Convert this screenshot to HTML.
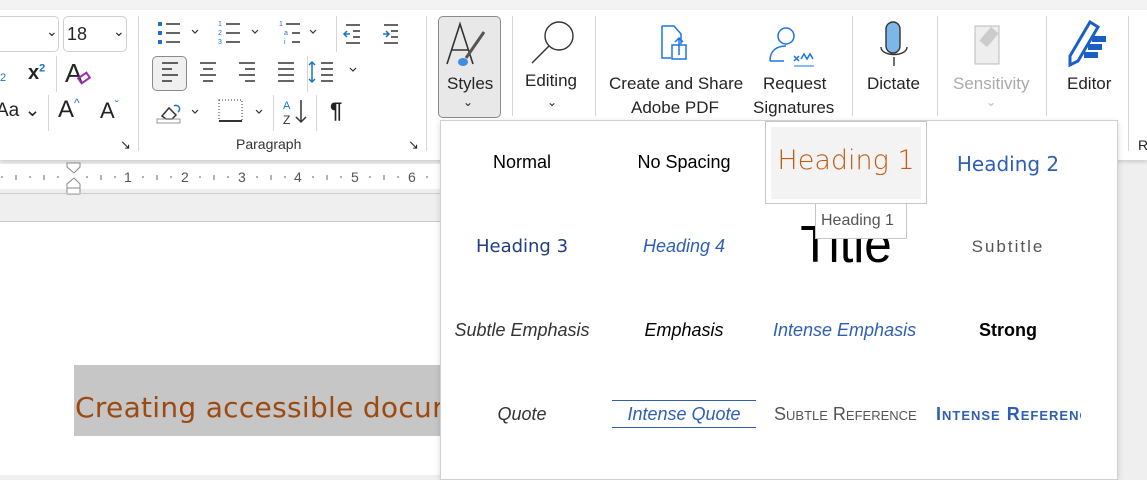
<!DOCTYPE html>
<html><head><meta charset="utf-8"><style>
*{margin:0;padding:0;box-sizing:border-box}
body{width:1147px;height:475px;overflow:hidden;position:relative;background:#efefef;font-family:"Liberation Sans",sans-serif;color:#242424}
.a{position:absolute}
.t{position:absolute;font-size:17px;color:#242424;white-space:nowrap}
.sep{position:absolute;width:1px;background:#d6d6d6}
.g{position:absolute;white-space:nowrap;text-align:center}
</style></head><body>
<div class="a" style="left:0;top:0;width:1147px;height:10px;background:#f3f3f3"></div>
<div class="a" style="left:0;top:10px;width:1147px;height:150px;background:#fff;box-shadow:0 2px 4px rgba(0,0,0,.15)"></div>
<div class="a" style="left:-10px;top:16px;width:69px;height:36px;border:1px solid #d0d0d0;border-radius:5px"></div>
<div class="t" style="left:46px;top:23px;font-size:14px">⌄</div>
<div class="a" style="left:63px;top:16px;width:64px;height:36px;border:1px solid #d0d0d0;border-radius:5px"></div>
<div class="t" style="left:67px;top:24px;font-size:18px">18</div>
<div class="t" style="left:113px;top:23px;font-size:14px">⌄</div>
<div class="t" style="left:28px;top:62px;font-size:20px;font-weight:bold">x<sup style="font-size:11px;color:#1a73c7">2</sup></div>
<div class="t" style="left:0;top:72px;font-size:11px;color:#1a73c7">2</div>
<div class="sep" style="left:56px;top:56px;height:36px"></div>
<div class="t" style="left:65px;top:58px;font-size:26px;font-weight:300">A</div>
<div class="a" style="left:78px;top:74px;width:12px;height:8px;border:2px solid #9b2fae;transform:rotate(-35deg)"></div>
<div class="t" style="left:-4px;top:99px;font-size:19px">Aa ⌄</div>
<div class="sep" style="left:48px;top:95px;height:36px"></div>
<div class="t" style="left:58px;top:96px;font-size:24px;font-weight:300">A<span style="font-size:12px;color:#1a73c7;vertical-align:top">^</span></div>
<div class="t" style="left:100px;top:98px;font-size:22px;font-weight:300">A<span style="font-size:12px;color:#1a73c7;vertical-align:top">ˇ</span></div>
<div class="t" style="left:120px;top:137px;font-size:13px">↘</div>
<div class="sep" style="left:138px;top:16px;height:135px"></div>
<svg class="a" style="left:150px;top:16px" width="276" height="112" stroke="#333" stroke-width="1.5" fill="none">
<g fill="#1a73c7" stroke="none"><rect x="8" y="6" width="4" height="4"/><rect x="8" y="15" width="4" height="4"/><rect x="8" y="24" width="4" height="4"/></g>
<path d="M16 8h14M16 17h14M16 26h14"/>
<path d="M42 14l3 3 3-3M102 14l3 3 3-3M160 14l3 3 3-3M200 52l3 3 3-3M42 94l3 3 3-3M106 94l3 3 3-3" stroke-width="1.2"/>
<g fill="#1a73c7" stroke="none" font-size="7" font-family="Liberation Sans"><text x="68" y="10">1</text><text x="68" y="19">2</text><text x="68" y="28">3</text><text x="129" y="10">1</text><text x="134" y="19">a</text><text x="134" y="28">i</text></g>
<path d="M76 8h14M76 17h14M76 26h14M136 8h14M142 17h8M142 26h8"/>
<path d="M196 9h14M203 15h7M203 21h7M196 27h14M234 9h14M241 15h7M241 21h7M234 27h14"/>
<path d="M200 18h-5M197 15l-3 3 3 3M233 18h6M236 15l3 3-3 3" stroke="#1a73c7"/>
<path d="M12 47h16M12 53h10M12 59h16M12 65h10" />
<path d="M50 47h16M53 53h10M50 59h16M53 65h10"/>
<path d="M89 47h16M95 53h10M89 59h16M95 65h10"/>
<path d="M128 47h16M128 53h16M128 59h16M128 65h16"/>
<path d="M171 47h12M171 53h12M171 59h12M171 65h12"/>
<path d="M162 46v20M159 49l3-3 3 3M159 63l3 3 3-3" stroke="#1a73c7"/>
<path d="M12 100l7-8 7 7-4 4h-6z"/><rect x="7" y="103" width="23" height="4" stroke="#999" stroke-width="1"/>
<path d="M24 90a3 3 0 0 1 4 6" stroke="#1a73c7"/>
<rect x="69" y="84" width="23" height="21" stroke-dasharray="1 2" stroke-width="1"/><path d="M69 105h23" stroke-width="2"/>
<g fill="#1a73c7" stroke="none" font-size="11" font-family="Liberation Sans"><text x="133" y="93">A</text></g>
<text x="133" y="108" font-size="12" fill="#333" stroke="none" font-family="Liberation Sans">Z</text>
<path d="M151 84v22M146 101l5 5 5-5"/>
</svg>
<div class="a" style="left:152px;top:56px;width:35px;height:35px;border:1px solid #8a8a8a;border-radius:5px;background:rgba(0,0,0,.06)"></div>
<div class="sep" style="left:336px;top:16px;height:36px"></div>
<div class="sep" style="left:307px;top:56px;height:36px"></div>
<div class="sep" style="left:273px;top:95px;height:36px"></div>
<div class="sep" style="left:316px;top:95px;height:36px"></div>
<div class="t" style="left:330px;top:98px;font-size:22px;font-weight:bold">¶</div>
<div class="t" style="left:236px;top:136px;font-size:14px;color:#333">Paragraph</div>
<div class="t" style="left:408px;top:137px;font-size:13px">↘</div>
<div class="sep" style="left:426px;top:16px;height:135px"></div>
<div class="a" style="left:438px;top:16px;width:63px;height:102px;background:#e8e8e8;border:1px solid #8a8a8a;border-radius:5px"></div>
<svg class="a" style="left:444px;top:20px" width="50" height="50"><path d="M3 44L16 4 29 44M8 30h17" fill="none" stroke="#333" stroke-width="1.6"/><path d="M40 12L22 38" stroke="#555" stroke-width="3"/><ellipse cx="19" cy="42" rx="5" ry="4" fill="#3d8ee0"/></svg>
<div class="t" style="left:447px;top:74px">Styles</div>
<div class="t" style="left:463px;top:95px;font-size:12px">⌄</div>
<div class="sep" style="left:512px;top:16px;height:100px"></div>
<svg class="a" style="left:528px;top:18px" width="50" height="48"><circle cx="31" cy="18" r="14" fill="none" stroke="#333" stroke-width="1.4"/><line x1="21" y1="28" x2="4" y2="45" stroke="#333" stroke-width="1.4"/></svg>
<div class="t" style="left:525px;top:71px">Editing</div>
<div class="t" style="left:547px;top:95px;font-size:12px">⌄</div>
<div class="sep" style="left:595px;top:16px;height:100px"></div>
<svg class="a" style="left:660px;top:25px" width="34" height="44"><path d="M2 1h12l7 8v10M2 1v32h9" fill="none" stroke="#1a73e8" stroke-width="1.5"/><rect x="12" y="20" width="14" height="14" fill="none" stroke="#1a73e8" stroke-width="1.5"/><path d="M19 30V13M15 17l4-4 4 4" fill="none" stroke="#1a73e8" stroke-width="1.5"/></svg>
<div class="t" style="left:609px;top:74px">Create and Share</div>
<div class="t" style="left:631px;top:98px">Adobe PDF</div>
<svg class="a" style="left:768px;top:24px" width="52" height="44"><circle cx="18" cy="12" r="8" fill="none" stroke="#1a73e8" stroke-width="1.5"/><path d="M2 37c0-10 6-15 16-15" fill="none" stroke="#1a73e8" stroke-width="1.5"/><path d="M2 37h14M26 32l5 5M31 32l-5 5M33 35l3-5 3 5 3-5 3 5" fill="none" stroke="#1a73e8" stroke-width="1.5"/><line x1="26" y1="42" x2="46" y2="42" stroke="#1a73e8"/></svg>
<div class="t" style="left:763px;top:74px">Request</div>
<div class="t" style="left:753px;top:98px">Signatures</div>
<div class="sep" style="left:852px;top:16px;height:100px"></div>
<svg class="a" style="left:876px;top:20px" width="36" height="48"><rect x="10" y="2" width="14" height="31" rx="7" fill="#7eb6ea" stroke="#333" stroke-width="1.4"/><path d="M5 27c0 10 26 10 26 0M18 37v9" fill="none" stroke="#333" stroke-width="1.4"/></svg>
<div class="t" style="left:867px;top:74px">Dictate</div>
<div class="sep" style="left:937px;top:16px;height:100px"></div>
<svg class="a" style="left:970px;top:20px" width="40" height="48"><rect x="5" y="6" width="24" height="38" fill="#eee" stroke="#bbb"/><rect x="14" y="8" width="10" height="18" fill="#ccc" transform="rotate(40 19 17)"/></svg>
<div class="t" style="left:953px;top:74px;color:#aaa">Sensitivity</div>
<div class="t" style="left:986px;top:95px;font-size:12px;color:#bbb">⌄</div>
<div class="sep" style="left:1046px;top:16px;height:100px"></div>
<svg class="a" style="left:1066px;top:20px" width="50" height="48"><path d="M24 2l8 5-20 34-8 4 0-9z" fill="#fff" stroke="#1a5fc4" stroke-width="3"/><rect x="26" y="16" width="14" height="6" fill="#1a5fc4"/><rect x="22" y="24" width="14" height="6" fill="#1a5fc4"/><rect x="18" y="32" width="14" height="6" fill="#1a5fc4"/></svg>
<div class="t" style="left:1067px;top:74px">Editor</div>
<div class="sep" style="left:1128px;top:16px;height:135px"></div>
<div class="t" style="left:1138px;top:137px;font-size:14px">R</div>
<div class="a" style="left:0;top:164px;width:440px;height:25px;background:#fff"></div>
<svg class="a" style="left:0;top:164px" width="440" height="26" stroke="#666" stroke-width="1">
<path d="M2 12v2M16 11v5M30 12v2M44 11v5M58 12v2M87 12v2M101 11v5M115 12v2M143 12v2M157 11v5M171 12v2M200 12v2M214 11v5M228 12v2M257 12v2M271 11v5M285 12v2M313 12v2M327 11v5M341 12v2M370 12v2M384 11v5M398 12v2M427 12v2"/>
<g fill="#555" stroke="none" font-size="14" font-family="Liberation Sans"><text x="124" y="18">1</text><text x="181" y="18">2</text><text x="238" y="18">3</text><text x="294" y="18">4</text><text x="351" y="18">5</text><text x="408" y="18">6</text></g>
</svg>
<svg class="a" style="left:65px;top:162px" width="18" height="34"><path d="M2 1h13v4l-6 6-7-6zM9 16l6 6v4H2v-4z" fill="#fff" stroke="#888"/><rect x="2" y="26" width="13" height="6" fill="#fff" stroke="#888"/></svg>
<div class="a" style="left:0;top:193px;width:440px;height:1px;background:#ccc"></div>
<div class="a" style="left:0;top:221px;width:440px;height:254px;background:#fff;border-top:1px solid #c8c8c8"></div>
<div class="a" style="left:74px;top:365px;width:366px;height:71px;background:#c6c6c6"></div>
<div class="t" style="left:75px;top:391px;color:#9c4a10;font-family:'DejaVu Sans',sans-serif;font-size:28px;letter-spacing:0.3px">Creating accessible docur</div>
<div class="a" style="left:440px;top:120px;width:678px;height:360px;background:#fff;border:1px solid #d0d0d0;box-shadow:0 2px 6px rgba(0,0,0,.15)"></div>
<div class="a" style="left:765px;top:121px;width:162px;height:83px;border:1px solid #c6c6c6;background:#fff"></div>
<div class="a" style="left:771px;top:127px;width:150px;height:72px;background:#f3f3f3"></div>
<div class="g" style="left:442px;top:152px;width:160px;font-size:18px;color:#000">Normal</div>
<div class="g" style="left:604px;top:152px;width:160px;font-size:18px;color:#000">No Spacing</div>
<div class="g" style="left:766px;top:145px;width:160px;color:#c55a11;font-family:'DejaVu Sans',sans-serif;font-weight:200;font-size:27px">Heading 1</div>
<div class="g" style="left:928px;top:152px;width:160px;color:#2f5fb5;font-family:'DejaVu Sans',sans-serif;font-size:20px">Heading 2</div>
<div class="g" style="left:442px;top:236px;width:160px;color:#1f3f7a;font-family:'DejaVu Sans',sans-serif;font-size:18px">Heading 3</div>
<div class="g" style="left:604px;top:236px;width:160px;font-size:18px;color:#2f5fb5;font-style:italic">Heading 4</div>
<div class="g" style="left:766px;top:215px;width:160px;color:#000;font-family:'Liberation Sans',sans-serif;font-size:52px;transform:scaleX(0.95)">Title</div>
<div class="a" style="left:815px;top:203px;width:92px;height:36px;background:#fff;border:1px solid #c6c6c6"></div>
<div class="t" style="left:821px;top:212px;font-size:16px;color:#555">Heading 1</div>
<div class="g" style="left:928px;top:237px;width:160px;font-size:17px;color:#555;letter-spacing:2px">Subtitle</div>
<div class="g" style="left:442px;top:320px;width:160px;font-size:18px;color:#333;font-style:italic">Subtle Emphasis</div>
<div class="g" style="left:604px;top:320px;width:160px;font-size:18px;color:#000;font-style:italic">Emphasis</div>
<div class="a" style="left:766px;top:316px;width:153px;height:30px;overflow:hidden"><div class="t" style="left:7px;top:4px;font-size:18px;color:#2f5fb5;font-style:italic">Intense Emphasis</div></div>
<div class="g" style="left:928px;top:320px;width:160px;font-size:18px;color:#000;font-weight:bold">Strong</div>
<div class="g" style="left:442px;top:404px;width:160px;font-size:18px;color:#333;font-style:italic">Quote</div>
<div class="a" style="left:612px;top:400px;width:144px;height:28px;border-top:1px solid #2f5fb5;border-bottom:1px solid #2f5fb5"></div>
<div class="g" style="left:604px;top:404px;width:160px;font-size:18px;color:#2f5fb5;font-style:italic">Intense Quote</div>
<div class="a" style="left:772px;top:400px;width:147px;height:30px;overflow:hidden"><div class="t" style="left:2px;top:4px;font-size:18px;color:#555;font-variant:small-caps">Subtle Reference</div></div>
<div class="a" style="left:934px;top:400px;width:147px;height:30px;overflow:hidden"><div class="t" style="left:2px;top:4px;font-size:18px;color:#2f5fb5;font-variant:small-caps;font-weight:bold;letter-spacing:1px">Intense Reference</div></div>
</body></html>
